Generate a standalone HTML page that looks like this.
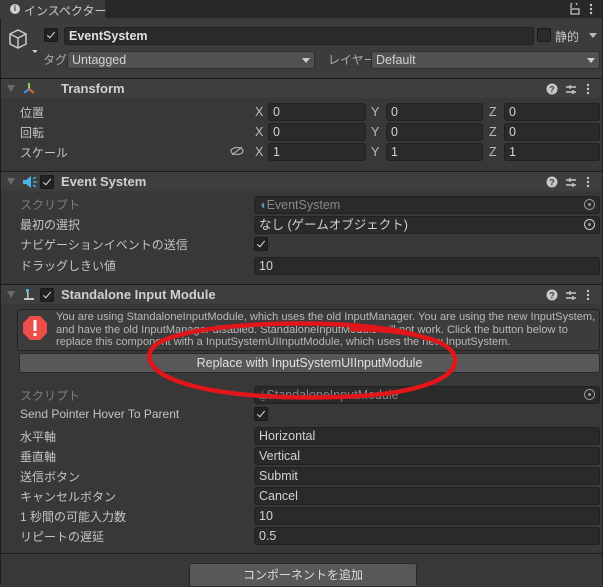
<!DOCTYPE html>
<html><head><meta charset="utf-8"><style>
*{box-sizing:border-box;margin:0;padding:0}
body{width:603px;height:584px;background:#383838;font-family:"Liberation Sans","Noto Sans CJK JP",sans-serif;font-size:12px;color:#c4c4c4;position:relative;overflow:hidden}
.a{position:absolute}
.f{position:absolute;background:#2a2a2a;border:1px solid #212121;border-radius:3px;height:18px;padding-left:4px;line-height:16px;color:#d2d2d2;font-size:12.5px;white-space:nowrap;overflow:hidden}
.lbl{position:absolute;left:20px;font-size:12px;color:#c4c4c4;white-space:nowrap}
.hdr{position:absolute;left:0;width:603px;height:20px;background:#3e3e3e;border-top:1px solid #1a1a1a}
.hdr .t{position:absolute;left:61px;top:2px;font-weight:bold;font-size:13px;color:#d0d0d0}
.tri{position:absolute;left:7px;top:6px;width:0;height:0;border-left:4px solid transparent;border-right:4px solid transparent;border-top:7px solid #6a6a6a}
.cb{position:absolute;width:14px;height:14px;background:#222;border:1px solid #191919;border-radius:2px}
.cb.on:after{content:"";position:absolute;left:4px;top:1px;width:3px;height:7px;border-right:1.5px solid #ddd;border-bottom:1.5px solid #ddd;transform:rotate(40deg)}
.xyz{position:absolute;color:#bbb;font-size:12.5px}
.pick{position:absolute;right:4px;top:2px;width:11px;height:11px;border:1.5px solid #999;border-radius:50%}
.pick:after{content:"";position:absolute;left:2.5px;top:2.5px;width:3px;height:3px;background:#999;border-radius:50%}
</style></head><body>
<svg width="0" height="0" style="position:absolute"><defs>
<g id="hi"><circle cx="6" cy="6" r="5.5" fill="#c8c8c8"/><text x="6" y="9.5" font-size="9" font-weight="bold" text-anchor="middle" fill="#3e3e3e" font-family="Liberation Sans">?</text>
<path d="M20 4H30M20 9H30M24 2V6M27 7V11" stroke="#c8c8c8" stroke-width="1.4" fill="none"/>
<circle cx="42" cy="2" r="1.2" fill="#c8c8c8"/><circle cx="42" cy="6" r="1.2" fill="#c8c8c8"/><circle cx="42" cy="10" r="1.2" fill="#c8c8c8"/></g>
</defs></svg>
<!-- tab bar -->
<div class="a" style="left:0;top:0;width:603px;height:18px;background:#282828"></div>
<div class="a" style="left:0;top:0;width:105px;height:18px;background:#3c3c3c"></div>
<div class="a" style="left:10px;top:4px;width:10px;height:10px;border-radius:50%;background:#d0d0d0;color:#3c3c3c;font-size:8px;line-height:10px;text-align:center;font-weight:bold">i</div>
<div class="a" style="left:24px;top:2px;font-size:12px;color:#c8c8c8">インスペクター</div>
<svg class="a" style="left:570px;top:3px" width="30" height="12"><path d="M1 5V2A3 3 0 0 1 7 2M1 6H9V11H1Z" fill="none" stroke="#c8c8c8" stroke-width="1.2"/><circle cx="21" cy="2" r="1.2" fill="#c8c8c8"/><circle cx="21" cy="6" r="1.2" fill="#c8c8c8"/><circle cx="21" cy="10" r="1.2" fill="#c8c8c8"/></svg>
<!-- header area -->
<div class="a" style="left:0;top:18px;width:603px;height:60px;background:#3c3c3c"></div>
<svg class="a" style="left:7px;top:27px" width="30" height="30" viewBox="0 0 30 30"><path d="M3 7 L11 3 L19 7 L19 17 L11 21 L3 17 Z M3 7 L11 11 L19 7 M11 11 L11 21" fill="none" stroke="#c8c8c8" stroke-width="1.5"/><path d="M25 23 L31 23 L28 26Z" fill="#ccc"/></svg>
<div class="cb on" style="left:44px;top:28px"></div>
<div class="f" style="left:64px;top:27px;width:470px;font-weight:bold;color:#e0e0e0">EventSystem</div>
<div class="cb" style="left:537px;top:28px;background:#2a2a2a"></div>
<div class="a" style="left:555px;top:28px;color:#c8c8c8">静的</div>
<div class="a" style="left:589px;top:33px;border-left:4px solid transparent;border-right:4px solid transparent;border-top:5px solid #bbb"></div>
<div class="a" style="left:43px;top:51px;color:#aaa">タグ</div>
<div class="f" style="left:67px;top:51px;width:248px;background:#515151;border-color:#303030">Untagged</div>
<div class="a" style="left:302px;top:58px;border-left:4px solid transparent;border-right:4px solid transparent;border-top:5px solid #ccc"></div>
<div class="a" style="left:328px;top:51px;color:#aaa">レイヤー</div>
<div class="f" style="left:371px;top:51px;width:229px;background:#515151;border-color:#303030">Default</div>
<div class="a" style="left:587px;top:58px;border-left:4px solid transparent;border-right:4px solid transparent;border-top:5px solid #ccc"></div>

<!-- Transform -->
<div class="hdr" style="top:78px"><div class="tri"></div>
<svg class="a" style="left:22px;top:3px" width="14" height="14"><path d="M7 1V7" stroke="#8fd14f" stroke-width="2"/><path d="M7 7L2 11" stroke="#3d9be9" stroke-width="2"/><path d="M7 7L12 11" stroke="#e8633a" stroke-width="2"/></svg>
<div class="t">Transform</div>
<svg class="a" style="left:546px;top:4px" width="50" height="12"><use href="#hi"/></svg></div>
<div class="lbl" style="top:104px">位置</div><div class="lbl" style="top:124px">回転</div><div class="lbl" style="top:144px">スケール</div>
<svg class="a" style="left:230px;top:146px" width="14" height="10"><ellipse cx="7" cy="5" rx="6" ry="3.5" fill="none" stroke="#aaa" stroke-width="1.2"/><path d="M2 9L12 1" stroke="#aaa" stroke-width="1.2"/></svg>
<div class="xyz" style="left:255px;top:105px">X</div><div class="f" style="left:268px;top:103px;width:98px">0</div>
<div class="xyz" style="left:371px;top:105px">Y</div><div class="f" style="left:386px;top:103px;width:97px">0</div>
<div class="xyz" style="left:489px;top:105px">Z</div><div class="f" style="left:504px;top:103px;width:96px">0</div>
<div class="xyz" style="left:255px;top:125px">X</div><div class="f" style="left:268px;top:123px;width:98px">0</div>
<div class="xyz" style="left:371px;top:125px">Y</div><div class="f" style="left:386px;top:123px;width:97px">0</div>
<div class="xyz" style="left:489px;top:125px">Z</div><div class="f" style="left:504px;top:123px;width:96px">0</div>
<div class="xyz" style="left:255px;top:145px">X</div><div class="f" style="left:268px;top:143px;width:98px">1</div>
<div class="xyz" style="left:371px;top:145px">Y</div><div class="f" style="left:386px;top:143px;width:97px">1</div>
<div class="xyz" style="left:489px;top:145px">Z</div><div class="f" style="left:504px;top:143px;width:96px">1</div>

<!-- Event System -->
<div class="hdr" style="top:171px"><div class="tri"></div>
<svg class="a" style="left:22px;top:3px" width="16" height="14"><path d="M1 5H4L9 1V13L4 9H1Z" fill="#4fb3e8"/><path d="M11 4L14 2M11 7H15M11 10L14 12" stroke="#4fb3e8" stroke-width="1.3"/></svg>
<div class="cb on" style="left:40px;top:3px"></div>
<div class="t">Event System</div>
<svg class="a" style="left:546px;top:4px" width="50" height="12"><use href="#hi"/></svg></div>
<div class="lbl" style="top:196px;color:#7d7d7d">スクリプト</div>
<div class="f" style="left:254px;top:196px;width:346px;color:#888"><span style="color:#5a8fb0">◖</span>EventSystem<div class="pick"></div></div>
<div class="lbl" style="top:216px">最初の選択</div>
<div class="f" style="left:254px;top:216px;width:346px">なし (ゲームオブジェクト)<div class="pick" style="border-color:#ccc"></div></div>
<div class="lbl" style="top:236px">ナビゲーションイベントの送信</div>
<div class="cb on" style="left:254px;top:237px"></div>
<div class="lbl" style="top:257px">ドラッグしきい値</div>
<div class="f" style="left:254px;top:257px;width:346px">10</div>

<!-- Standalone -->
<div class="hdr" style="top:284px"><div class="tri"></div>
<svg class="a" style="left:22px;top:3px" width="14" height="14"><rect x="4" y="1" width="3" height="3" fill="#4fb3e8"/><rect x="5" y="4" width="1.5" height="6" fill="#c8c8c8"/><rect x="2" y="10" width="10" height="2" fill="#c8c8c8"/></svg>
<div class="cb on" style="left:40px;top:3px"></div>
<div class="t">Standalone Input Module</div>
<svg class="a" style="left:546px;top:4px" width="50" height="12"><use href="#hi"/></svg></div>
<div class="a" style="left:17px;top:309px;width:583px;height:42px;background:#3c3c3c;border:1px solid #232323;border-radius:3px"></div>
<svg class="a" style="left:22px;top:315px" width="26" height="26"><polygon points="8,1 18,1 25,8 25,18 18,25 8,25 1,18 1,8" fill="#ec4f4a"/><rect x="11.5" y="5" width="3" height="11" fill="#fff"/><rect x="11.5" y="18" width="3" height="3" fill="#fff"/></svg>
<div class="a" style="left:56px;top:311px;width:545px;font-size:11.1px;line-height:12.5px;color:#b8b8b8">You are using StandaloneInputModule, which uses the old InputManager. You are using the new InputSystem, and have the old InputManager disabled. StandaloneInputModule will not work. Click the button below to replace this component with a InputSystemUIInputModule, which uses the new InputSystem.</div>
<div class="a" style="left:19px;top:353px;width:581px;height:20px;background:#585858;border:1px solid #2a2a2a;border-radius:3px;text-align:center;line-height:18px;color:#e0e0e0;font-size:12.5px">Replace with InputSystemUIInputModule</div>
<div class="lbl" style="top:387px;color:#7d7d7d">スクリプト</div>
<div class="f" style="left:254px;top:386px;width:346px;color:#888"><span style="color:#5a8fb0">⍊</span>StandaloneInputModule<div class="pick"></div></div>
<div class="lbl" style="top:407px">Send Pointer Hover To Parent</div>
<div class="cb on" style="left:254px;top:407px"></div>
<div class="lbl" style="top:428px">水平軸</div><div class="f" style="left:254px;top:427px;width:346px">Horizontal</div>
<div class="lbl" style="top:448px">垂直軸</div><div class="f" style="left:254px;top:447px;width:346px">Vertical</div>
<div class="lbl" style="top:468px">送信ボタン</div><div class="f" style="left:254px;top:467px;width:346px">Submit</div>
<div class="lbl" style="top:488px">キャンセルボタン</div><div class="f" style="left:254px;top:487px;width:346px">Cancel</div>
<div class="lbl" style="top:508px">1 秒間の可能入力数</div><div class="f" style="left:254px;top:507px;width:346px">10</div>
<div class="lbl" style="top:528px">リピートの遅延</div><div class="f" style="left:254px;top:527px;width:346px">0.5</div>
<div class="a" style="left:0;top:553px;width:603px;height:1px;background:#1c1c1c"></div>
<div class="a" style="left:189px;top:563px;width:228px;height:24px;background:#585858;border:1px solid #2a2a2a;border-radius:3px;text-align:center;line-height:22px;color:#dcdcdc;font-size:12px">コンポーネントを追加</div>
<div class="a" style="left:0;top:18px;width:1px;height:566px;background:#1e1e1e"></div>
<div class="a" style="left:602px;top:18px;width:1px;height:566px;background:#1e1e1e"></div>
<!-- red ellipse -->
<svg class="a" style="left:0;top:0" width="603" height="584"><path d="M352 329 C410 330 452 340 455 358 C458 378 420 392 360 396 C290 400 220 396 180 382 C145 370 142 352 160 342 C190 327 260 322 330 324 C380 326 410 332 425 338" fill="none" stroke="#e0161b" stroke-width="4.5" stroke-linecap="round"/></svg>
</body></html>
